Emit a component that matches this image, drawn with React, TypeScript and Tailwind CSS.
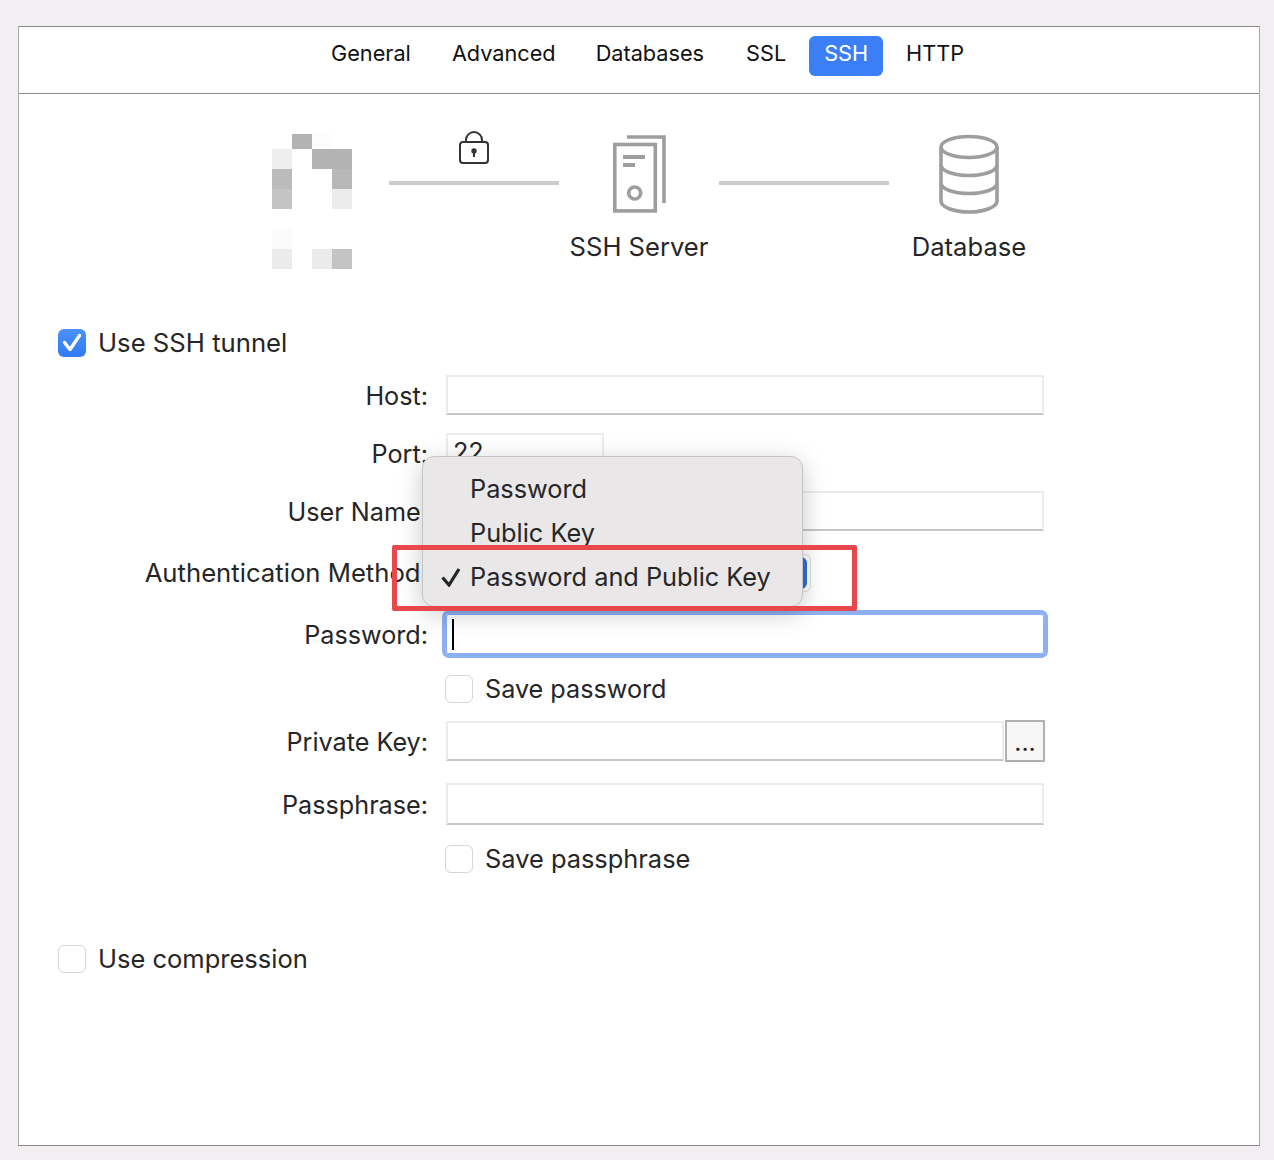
const font = "font-['Inter','Noto_Sans',sans-serif]";

const mosaic: [number, number, number, number, string][] = [
  [20, 0, 20, 15, '#b3b3b3'],
  [40, 0, 20, 15, '#fcfcfc'],
  [0, 15, 20, 20, '#eeeeee'],
  [40, 15, 20, 20, '#b3b3b3'],
  [60, 15, 20, 20, '#b3b3b3'],
  [0, 35, 20, 20, '#bbbbbb'],
  [60, 35, 20, 20, '#b8b8b8'],
  [0, 55, 20, 20, '#c4c4c4'],
  [60, 55, 20, 20, '#ececec'],
  [0, 95, 20, 20, '#fbfbfb'],
  [0, 115, 20, 20, '#ebebeb'],
  [40, 115, 20, 20, '#ebebeb'],
  [60, 115, 20, 20, '#c4c4c4'],
];

const tabs = [
  { name: 'General', gap: '' },
  { name: 'Advanced', gap: 'ml-[11px]' },
  { name: 'Databases', gap: 'ml-[10px]' },
  { name: 'SSL', gap: 'ml-3' },
  { name: 'SSH', gap: 'ml-2' },
  { name: 'HTTP', gap: 'ml-2' },
];

function Connector({ lock }: { lock?: boolean }) {
  return (
    <div className="w-[170px] flex flex-col items-center">
      <div className="h-[47px] w-full flex justify-center">
        {lock && (
          <svg width="32" height="34" viewBox="0 0 32 34" fill="none" stroke="#333" strokeWidth="2" className="-mt-[3px]">
            <path d="M8 11V9a8 8 0 0 1 16 0v2" />
            <rect x="2" y="11" width="28" height="21" rx="3" />
            <circle cx="16" cy="20" r="2.700" fill="#333" stroke="none" />
            <path d="M16 20v6" />
          </svg>
        )}
      </div>
      <div className="w-full h-1 bg-[#cccccc]" />
    </div>
  );
}

function Field({ className = '', children }: { className?: string; children?: React.ReactNode }) {
  return (
    <div className={`bg-white border-2 border-[#ececec] border-b-[#c6c6c6] ${className}`}>{children}</div>
  );
}

function Row({ label, className = '', labelClass = '', children }: { label: string; className?: string; labelClass?: string; children: React.ReactNode }) {
  return (
    <div className={`flex items-center ${className}`}>
      <div className={`w-[409px] text-right whitespace-nowrap ${labelClass}`}>{label}</div>
      <div className="ml-[18px] flex">{children}</div>
    </div>
  );
}

function Check({ label, className = '', checked }: { label: string; className?: string; checked?: boolean }) {
  return (
    <div className={`flex items-center gap-3 ${className}`}>
      {checked ? (
        <div className="w-7 h-7 rounded-md bg-gradient-to-b from-[#4c91f9] to-[#2f79f4] flex items-center justify-center">
          <svg width="20" height="20" viewBox="0 0 20 20" fill="none" stroke="#fff" strokeWidth="3.400" strokeLinecap="round" strokeLinejoin="round">
            <path d="M2.500 9.500L8 16.500L17.500 2.500" />
          </svg>
        </div>
      ) : (
        <div className="w-7 h-7 rounded-md bg-white border border-[#d6d6d6]" />
      )}
      <span>{label}</span>
    </div>
  );
}

export default function App() {
  return (
    <div className={`h-[1160px] bg-[#f2eef1] pt-[26px] pl-[18px] pr-[14px] text-[#262626] text-[25.200px] leading-[30px] ${font}`}>
      <div className="relative h-[1120px] bg-white border border-[#a8a8a8] border-t-[#8a8a8a] border-b-[#8a8a8a] overflow-hidden">
        {/* Tabs */}
        <div className="h-[67px] border-b border-[#8f8f8f] pt-[9px] pl-[297px] flex items-start text-[21.700px] text-[#111]">
          {tabs.map(tab => (
            <div
              key={tab.name}
              className={`h-10 px-[15px] pb-[6px] rounded-md flex items-center ${tab.gap} ${tab.name === 'SSH' ? 'bg-[#3b7ff6] text-white' : ''}`}
            >
              {tab.name}
            </div>
          ))}
        </div>

        {/* Diagram */}
        <div className="mt-10 pl-[253px] flex items-start">
          <svg width="80" height="135" className="mr-[37px]">
            {mosaic.map(([x, y, w, h, c], i) => (
              <rect key={i} x={x} y={y} width={w} height={h} fill={c} />
            ))}
          </svg>
          <Connector lock />
          <div className="w-[160px] flex flex-col items-center text-[25.600px]">
            <svg width="54" height="80" viewBox="0 0 54 80" fill="none" stroke="#9e9e9e" strokeWidth="3.600">
              <path d="M15 3h37v66" />
              <rect x="2.800" y="10.500" width="40.500" height="66.400" />
              <path d="M11 23h22M11 31h12" strokeWidth="3.800" />
              <circle cx="22.700" cy="59" r="6" />
            </svg>
            <div className="mt-[18px] whitespace-nowrap">SSH Server</div>
          </div>
          <Connector />
          <div className="w-[160px] flex flex-col items-center text-[25.600px]">
            <svg width="60" height="80" viewBox="0 0 60 80" fill="none" stroke="#9e9e9e" strokeWidth="3.600">
              <ellipse cx="30" cy="13" rx="28" ry="10.500" />
              <path d="M2 13v54c0 6 12.500 11 28 11s28-5 28-11V13" />
              <path d="M2 31c0 6 12.500 10.500 28 10.500S58 37 58 31" />
              <path d="M2 49c0 6 12.500 10.500 28 10.500S58 55 58 49" />
            </svg>
            <div className="mt-[18px] whitespace-nowrap">Database</div>
          </div>
        </div>

        {/* Form */}
        <Check label="Use SSH tunnel" checked className="mt-[59px] ml-[39px] text-[25.700px]" />
        <Row label="Host:" labelClass="mt-[2px]" className="mt-[17px]">
          <Field className="w-[598px] h-10" />
        </Row>
        <Row label="Port:" labelClass="mt-[2px]" className="mt-[18px]">
          <Field className="w-[158px] h-10 pl-[5px] pt-[2px]">22</Field>
        </Row>
        <Row label="User Name:" labelClass="mt-[2px]" className="mt-[18px]">
          <Field className="w-[598px] h-10" />
        </Row>
        <Row label="Authentication Method:" labelClass="text-[25.700px]" className="mt-[23px]">
          <div className="w-[365px] h-[38px] flex justify-end items-center border border-[#dddddd] rounded-md pr-[3px]">
            <div className="w-8 h-8 rounded-md bg-[#2f6fe0]" />
          </div>
        </Row>
        <Row label="Password:" labelClass="mt-[2px]" className="mt-[22px]">
          <div className="w-[598px] h-10 bg-white rounded-[3px] border border-[#8cb0f2] outline-4 outline-[#8cb0f2] pl-[5px] pt-1">
            <div className="w-[2px] h-[31px] bg-black" />
          </div>
        </Row>
        <Check label="Save password" className="mt-5 ml-[426px]" />
        <Row label="Private Key:" className="mt-[17px]">
          <Field className="w-[558px] h-10" />
          <div className="w-10 h-[42px] -mt-px ml-px bg-[#f7f7f7] border-2 border-[#b0b0b0] flex items-end justify-center pb-[6px] text-[25px] leading-[24px]">
            ...
          </div>
        </Row>
        <Row label="Passphrase:" labelClass="mt-[2px]" className="mt-[21px]">
          <Field className="w-[598px] h-[42px]" />
        </Row>
        <Check label="Save passphrase" className="mt-[19px] ml-[426px] text-[25.400px]" />
        <Check label="Use compression" className="mt-[70px] ml-[39px] text-[25.500px]" />

        {/* Dropdown */}
        <div className="absolute left-[403px] top-[429px] w-[381px] h-[151px] rounded-xl bg-[#e9e7e8] border border-[#c6c4c5] shadow-[0_6px_24px_rgba(0,0,0,0.22)] pt-[10px] text-[25.300px]">
          {['Password', 'Public Key', 'Password and Public Key'].map((item, i) => (
            <div key={item} className="relative h-11 pl-[47px] flex items-center whitespace-nowrap">
              {i === 2 && (
                <svg width="20" height="20" viewBox="0 0 20 20" fill="none" stroke="#262626" strokeWidth="3.200" className="absolute left-[18px] top-3">
                  <path d="M1.500 10.500L8 18L18 2" />
                </svg>
              )}
              {item}
            </div>
          ))}
        </div>

        {/* Red annotation */}
        <div className="absolute left-[373px] top-[518px] w-[465px] h-[66px] border-[5px] border-[#e8474c] rounded-[2px]" />
      </div>
    </div>
  );
}
